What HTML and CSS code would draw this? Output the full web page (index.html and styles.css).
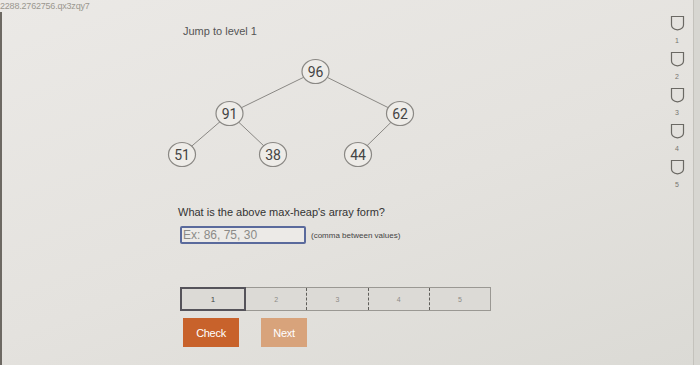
FILE: index.html
```html
<!DOCTYPE html>
<html lang="en">
<head>
    <meta charset="UTF-8">
    <meta name="viewport" content="width=device-width, initial-scale=1.0">
    <title>Jump to level 1</title>
    <link rel="stylesheet" href="styles.css">
</head>
<body>
    <div class="page">
        <div class="main">
            <div class="session-id">2288.2762756.qx3zqy7</div>
            <div class="body-row">
                <div class="edge"></div>
                <main class="content">
                    <div class="jump">Jump to level 1</div>

                    <!-- heap tree -->
                    <svg class="tree" width="260" height="120" viewBox="0 0 260 120">
                        <g class="edges">
                            <line x1="150.5" y1="16.5" x2="64.5" y2="58.5"/>
                            <line x1="150.5" y1="16.5" x2="235" y2="58.5"/>
                            <line x1="64.5" y1="58.5" x2="17" y2="99.5"/>
                            <line x1="64.5" y1="58.5" x2="108" y2="99.5"/>
                            <line x1="235" y1="58.5" x2="193" y2="99.5"/>
                        </g>
                        <g class="nodes">
                            <ellipse cx="150.5" cy="16.5" rx="13.5" ry="12"/>
                            <text x="150.5" y="17">96</text>
                            <ellipse cx="64.5" cy="58.5" rx="13.5" ry="12"/>
                            <text x="64.5" y="59">91</text>
                            <ellipse cx="235" cy="58.5" rx="13.5" ry="12"/>
                            <text x="235" y="59">62</text>
                            <ellipse cx="17" cy="99.5" rx="13.5" ry="12"/>
                            <text x="17" y="100">51</text>
                            <ellipse cx="108" cy="99.5" rx="13.5" ry="12"/>
                            <text x="108" y="100">38</text>
                            <ellipse cx="193" cy="99.5" rx="13.5" ry="12"/>
                            <text x="193" y="100">44</text>
                        </g>
                    </svg>

                    <div class="question">What is the above max-heap's array form?</div>
                    <div class="answer-row">
                        <input class="answer" type="text" placeholder="Ex: 86, 75, 30">
                        <span class="hint">(comma between values)</span>
                    </div>

                    <div class="progress">
                        <div class="step current">1</div>
                        <div class="step">2</div>
                        <div class="step dashed">3</div>
                        <div class="step dashed">4</div>
                        <div class="step dashed">5</div>
                    </div>

                    <div class="buttons">
                        <button class="btn check">Check</button>
                        <button class="btn next">Next</button>
                    </div>
                </main>
            </div>
        </div>

        <aside class="levels">
            <div class="level">
                <svg width="15" height="16" viewBox="0 0 15 16"><path d="M1.5 1.5 H13.5 V10 Q13.5 14 7.5 14.8 Q1.5 14 1.5 10 Z"/></svg>
                <span>1</span>
            </div>
            <div class="level">
                <svg width="15" height="16" viewBox="0 0 15 16"><path d="M1.5 1.5 H13.5 V10 Q13.5 14 7.5 14.8 Q1.5 14 1.5 10 Z"/></svg>
                <span>2</span>
            </div>
            <div class="level">
                <svg width="15" height="16" viewBox="0 0 15 16"><path d="M1.5 1.5 H13.5 V10 Q13.5 14 7.5 14.8 Q1.5 14 1.5 10 Z"/></svg>
                <span>3</span>
            </div>
            <div class="level">
                <svg width="15" height="16" viewBox="0 0 15 16"><path d="M1.5 1.5 H13.5 V10 Q13.5 14 7.5 14.8 Q1.5 14 1.5 10 Z"/></svg>
                <span>4</span>
            </div>
            <div class="level">
                <svg width="15" height="16" viewBox="0 0 15 16"><path d="M1.5 1.5 H13.5 V10 Q13.5 14 7.5 14.8 Q1.5 14 1.5 10 Z"/></svg>
                <span>5</span>
            </div>
        </aside>
        <div class="rim"></div>
    </div>
</body>
</html>
```

FILE: styles.css
```css
* {
    margin: 0;
    padding: 0;
    box-sizing: border-box;
    font-family: 'Liberation Sans', Arial, sans-serif;
}

:root {
    --text: #3a3a3a;
    --muted: #8c8a86;
    --line: #8a8884;
    --check: #c8622b;
    --next: #d8a37b;
}

body {
    width: 700px;
    height: 365px;
    overflow: hidden;
    background: linear-gradient(160deg, #ebe9e6 0%, #e4e2de 55%, #dbdad5 100%);
    color: var(--text);
}

.page {
    display: flex;
    height: 365px;
}

.main {
    flex: 1;
    display: flex;
    flex-direction: column;
}

.session-id {
    height: 12px;
    padding-top: 1px;
    font-size: 9px;
    line-height: 10px;
    color: #9a978f;
    letter-spacing: -0.2px;
}

.body-row {
    flex: 1;
    display: flex;
}

.edge {
    width: 2px;
    background: #6d6963;
}

.content {
    padding-left: 176px;
    padding-top: 13px;
}

.jump {
    margin-left: 5px;
    font-size: 11px;
    line-height: 12px;
    color: #555;
}

.tree {
    display: block;
    margin-left: -13px;
    margin-top: 18px;
}

.tree .edges line {
    stroke: var(--line);
    stroke-width: 1;
}

.tree .nodes ellipse {
    fill: #eeece8;
    stroke: var(--line);
    stroke-width: 1.2;
}

.tree .nodes text {
    font-family: Roboto, sans-serif;
    font-size: 14px;
    fill: #444;
    text-anchor: middle;
    dominant-baseline: central;
}

.question {
    margin-top: 30px;
    font-size: 11px;
    line-height: 14px;
    color: #333;
}

.answer-row {
    display: flex;
    align-items: center;
    gap: 5px;
    margin-top: 7px;
    margin-left: 2px;
}

.answer {
    width: 126px;
    height: 18px;
    border: 2px solid #5a6a9c;
    border-radius: 2px;
    background: #eceae7;
    padding-left: 1px;
    font-size: 12px;
    color: #444;
    outline: none;
}

.answer::placeholder {
    color: #8b8a88;
}

.hint {
    font-size: 8px;
    color: #444;
}

.progress {
    display: flex;
    width: 311px;
    height: 24px;
    margin-top: 43px;
    margin-left: 2px;
    border: 1px solid #9a9893;
    background: #dcdad6;
}

.step {
    flex: 1;
    display: flex;
    align-items: center;
    justify-content: center;
    font-size: 7px;
    color: #8d8b86;
}

.step.current {
    flex: 0 0 66px;
    margin: -1px 0 -1px -1px;
    border: 2px solid #55535a;
    font-size: 8px;
    color: #444;
}

.step.dashed {
    border-left: 1px dashed #5f5d59;
}

.buttons {
    display: flex;
    gap: 22px;
    margin-top: 7px;
    margin-left: 5px;
}

.btn {
    height: 29px;
    border: none;
    color: #fff;
    font-size: 11px;
    letter-spacing: -0.3px;
}

.btn.check {
    width: 56px;
    background: var(--check);
}

.btn.next {
    width: 46px;
    background: var(--next);
}

.levels {
    width: 28px;
    padding-top: 15px;
    display: flex;
    flex-direction: column;
    align-items: center;
    padding-right: 4px;
}

.level {
    display: flex;
    flex-direction: column;
    align-items: center;
    height: 36px;
}

.level svg path {
    fill: none;
    stroke: #6b6964;
    stroke-width: 1.2;
}

.level span {
    font-size: 7px;
    line-height: 10px;
    color: #77756f;
    margin-top: 5px;
}

.rim {
    width: 7px;
    border-left: 1px solid #c4c2bc;
    background: #d7d6d1;
}
```
